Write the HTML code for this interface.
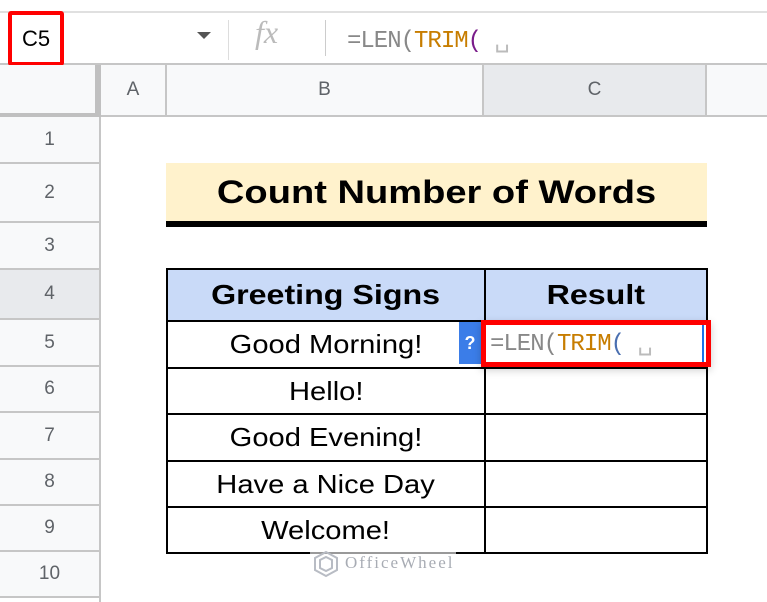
<!DOCTYPE html>
<html><head><meta charset="utf-8"><style>
*{margin:0;padding:0;box-sizing:border-box}
body{width:767px;height:602px;overflow:hidden;background:#fff;font-family:"Liberation Sans",Arial,sans-serif;position:relative}
.a{position:absolute}
.rn{position:absolute;left:0;width:99px;background:#f8f9fa;border-bottom:2px solid #c6c6c6;color:#5f6368;font-size:19px;display:flex;align-items:center;justify-content:center}
.ch{position:absolute;top:65px;height:52px;background:#f8f9fa;border-right:2px solid #c6c6c6;border-bottom:2px solid #c6c6c6;color:#5f6368;font-size:19px;display:flex;align-items:center;justify-content:center}
.cell{position:absolute;border:2px solid #000;display:flex;align-items:center;justify-content:center;font-size:26px;color:#000}
.cell span{display:inline-block;transform:scaleX(1.12)}
.hd span{transform:scaleX(1.15)}
</style></head><body>
<div class="a" style="left:0;top:11px;width:767px;height:2px;background:#e0e0e0"></div>
<div class="a" style="left:0;top:63px;width:767px;height:2px;background:#c6c6c6"></div>
<div class="a" style="left:8px;top:11px;width:56px;height:55px;border:4px solid #f00;border-radius:3px;font-size:22px;display:flex;align-items:center;justify-content:center;color:#000">C5</div>
<div class="a" style="left:197px;top:32px;width:0;height:0;border-left:7px solid transparent;border-right:7px solid transparent;border-top:7px solid #555"></div>
<div class="a" style="left:228px;top:20px;width:1px;height:40px;background:#ddd"></div>
<div class="a" style="left:255px;top:14px;font-family:'Liberation Serif',serif;font-style:italic;font-size:32px;color:#bbb">fx</div>
<div class="a" style="left:325px;top:20px;width:1px;height:36px;background:#ccc"></div>
<div class="a" style="left:347px;top:25px;font-family:'Liberation Mono',monospace;font-size:24px;color:#888;letter-spacing:-1px">=LEN(<span style="color:#c77d00">TRIM</span><span style="color:#7a1c8a">(</span> <span style="color:#bbb">␣</span></div>
<div class="a" style="left:0;top:65px;width:101px;height:54px;background:#f8f9fa;border-right:6px solid #c0c0c0;border-bottom:6px solid #c0c0c0"></div>
<div class="ch" style="left:101px;width:66px">A</div>
<div class="ch" style="left:167px;width:317px">B</div>
<div class="ch" style="left:484px;width:223px;background:#e8eaed">C</div>
<div class="ch" style="left:707px;width:70px"></div>
<div class="a" style="left:99px;top:117px;width:2px;height:485px;background:#c6c6c6"></div>
<div class="rn" style="top:117px;height:47px">1</div>
<div class="rn" style="top:164px;height:59px">2</div>
<div class="rn" style="top:223px;height:47px">3</div>
<div class="rn" style="top:270px;height:50px;background:#e8eaed">4</div>
<div class="rn" style="top:320px;height:47px">5</div>
<div class="rn" style="top:367px;height:46px">6</div>
<div class="rn" style="top:413px;height:47px">7</div>
<div class="rn" style="top:460px;height:46px">8</div>
<div class="rn" style="top:506px;height:46px">9</div>
<div class="rn" style="top:552px;height:46px">10</div>
<div class="a" style="left:166px;top:163px;width:541px;height:59px;background:#fff2cc;display:flex;align-items:center;justify-content:center;font-size:32px;font-weight:bold;color:#000"><span style="display:inline-block;transform:scaleX(1.19)">Count Number of Words</span></div>
<div class="a" style="left:166px;top:221px;width:541px;height:6px;background:#000"></div>
<div class="cell hd" style="left:166px;top:268px;width:320px;height:54px;background:#c9daf8;font-weight:bold;font-size:28px"><span>Greeting Signs</span></div>
<div class="cell hd" style="left:484px;top:268px;width:224px;height:54px;background:#c9daf8;font-weight:bold;font-size:28px"><span>Result</span></div>
<div class="cell" style="left:166px;top:320px;width:320px;height:49px"><span>Good Morning!</span></div>
<div class="cell" style="left:484px;top:320px;width:224px;height:49px"></div>
<div class="cell" style="left:166px;top:367px;width:320px;height:48px"><span>Hello!</span></div>
<div class="cell" style="left:484px;top:367px;width:224px;height:48px"></div>
<div class="cell" style="left:166px;top:413px;width:320px;height:49px"><span>Good Evening!</span></div>
<div class="cell" style="left:484px;top:413px;width:224px;height:49px"></div>
<div class="cell" style="left:166px;top:460px;width:320px;height:48px"><span>Have a Nice Day</span></div>
<div class="cell" style="left:484px;top:460px;width:224px;height:48px"></div>
<div class="cell" style="left:166px;top:506px;width:320px;height:48px"><span>Welcome!</span></div>
<div class="cell" style="left:484px;top:506px;width:224px;height:48px"></div>
<div class="a" style="left:459px;top:322px;width:22px;height:42px;background:#3b7de8;color:#fff;font-weight:bold;font-size:18px;display:flex;align-items:center;justify-content:center">?</div>
<div class="a" style="left:481px;top:320px;width:230px;height:47px;border:5px solid #f00;background:#fff;box-shadow:0 3px 8px rgba(0,0,0,.2)"></div>
<div class="a" style="left:702px;top:325px;width:2px;height:37px;background:#1a73e8"></div>
<div class="a" style="left:490px;top:328px;font-family:'Liberation Mono',monospace;font-size:24px;color:#888;letter-spacing:-1px">=LEN(<span style="color:#c77d00">TRIM</span><span style="color:#4a6fb0">(</span> <span style="color:#bbb">␣</span></div>
<div class="a" style="left:310px;top:548px;width:146px;height:30px;background:rgba(255,255,255,.6)"></div>
<svg class="a" style="left:312px;top:550px" width="28" height="28" viewBox="0 0 28 28"><path d="M14 2 L25 8 V20 L14 26 L3 20 V8 Z M14 7 L20 10 V18 L14 21 L8 18 V10 Z" fill="none" stroke="#b8bcc4" stroke-width="2"/></svg>
<div class="a" style="left:345px;top:553px;font-family:'Liberation Serif',serif;font-size:17px;color:#a8acb4;letter-spacing:2px">OfficeWheel</div>
</body></html>
